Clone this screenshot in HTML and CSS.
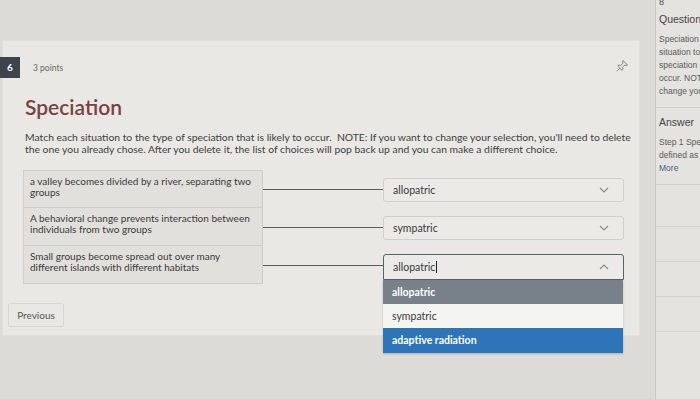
FILE: index.html
```html
<!DOCTYPE html>
<html lang="en">
<head>
    <meta charset="UTF-8">
    <meta name="viewport" content="width=device-width, initial-scale=1.0">
    <title>Speciation</title>
    <link rel="stylesheet" href="styles.css">
</head>
<body>
    <div class="page">
        <div class="main">
            <div class="card">
                <div class="question-header">
                    <div class="badge">6</div>
                    <div class="points">3 points</div>
                    <svg class="pin" width="14" height="14" viewBox="0 0 14 14">
                        <path d="M8 1.5 L12.5 6 L11.3 6.6 L9.6 6.2 L7.6 8.2 L7.9 10.4 L7 11.3 L2.7 7 L3.6 6.1 L5.8 6.4 L7.8 4.4 L7.4 2.7 Z" fill="none" stroke="#777" stroke-width="0.9" stroke-linejoin="round"/>
                        <path d="M4.8 9.2 L1.8 12.2" stroke="#777" stroke-width="0.9"/>
                    </svg>
                </div>

                <h1 class="title">Speciation</h1>

                <p class="prompt">Match each situation to the type of speciation that is likely to occur.&nbsp; NOTE: If you want to change your selection, you'll need to delete the one you already chose. After you delete it, the list of choices will pop back up and you can make a different choice.</p>

                <div class="match-list">
                    <div class="match-row">
                        <div class="situation first">a valley becomes divided by a river, separating two groups</div>
                        <div class="connector"></div>
                        <div class="select">
                            <span>allopatric</span>
                            <svg class="chevron" width="10" height="6" viewBox="0 0 10 6"><path d="M1 1 L5 5 L9 1" fill="none" stroke="#8a8a8a" stroke-width="1.1"/></svg>
                        </div>
                    </div>
                    <div class="match-row">
                        <div class="situation">A behavioral change prevents interaction between individuals from two groups</div>
                        <div class="connector"></div>
                        <div class="select">
                            <span>sympatric</span>
                            <svg class="chevron" width="10" height="6" viewBox="0 0 10 6"><path d="M1 1 L5 5 L9 1" fill="none" stroke="#8a8a8a" stroke-width="1.1"/></svg>
                        </div>
                    </div>
                    <div class="match-row">
                        <div class="situation">Small groups become spread out over many different islands with different habitats</div>
                        <div class="connector"></div>
                        <div class="select open">
                            <span>allopatric<span class="caret"></span></span>
                            <svg class="chevron" width="10" height="6" viewBox="0 0 10 6"><path d="M1 5 L5 1 L9 5" fill="none" stroke="#8a8a8a" stroke-width="1.1"/></svg>
                            <div class="options">
                                <div class="option hover">allopatric</div>
                                <div class="option">sympatric</div>
                                <div class="option active">adaptive radiation</div>
                            </div>
                        </div>
                    </div>
                </div>

                <button class="prev-button">Previous</button>
            </div>
        </div>

        <div class="side">
            <div class="side-top">8</div>
            <div class="side-title">Question</div>
            <div class="side-text">Speciation<br>situation to<br>speciation<br>occur. NOTE<br>change your</div>
            <div class="side-sep"></div>
            <div class="side-title">Answer</div>
            <div class="side-text">Step 1 Spe<br>defined as<br><span class="more">More</span></div>
            <div class="side-sep"></div>
            <div class="side-block"></div>
            <div class="side-block"></div>
            <div class="side-block"></div>
            <div class="side-block"></div>
        </div>
    </div>
</body>
</html>
```

FILE: styles.css
```css
body {
    margin: 0;
    background: #dcdbd7;
    font-family: Lato, "Open Sans", sans-serif;
    color: #3b3b3b;
}
.page {
    display: flex;
    width: 700px;
    height: 399px;
    overflow: hidden;
}
.main {
    width: 655px;
    flex-shrink: 0;
    padding-top: 41px;
}
.card {
    position: relative;
    margin-left: 3px;
    width: 636px;
    height: 294px;
    background: #e9e8e4;
    box-shadow: 0 0 0 1px #e1e0dc;
}
.question-header {
    display: flex;
    align-items: center;
    height: 21px;
    padding-top: 16px;
}
.badge {
    width: 20px;
    height: 21px;
    margin-left: -3px;
    background: #3d444b;
    color: #fff;
    font-size: 10px;
    font-weight: bold;
    line-height: 21px;
    text-align: center;
}
.points {
    margin-left: 13px;
    font-size: 8.5px;
    color: #666;
}
.pin {
    margin-left: auto;
    margin-right: 10px;
    margin-top: -4px;
}
.title {
    margin: 16px 0 0 22px;
    font-size: 21px;
    font-weight: 600;
    color: #7c4043;
    line-height: 26px;
}
.prompt {
    margin: 11px 0 0 22px;
    width: 612px;
    font-size: 10.35px;
    line-height: 12px;
    color: #3e3e3e;
}
.match-list {
    margin: 15px 0 0 20px;
}
.match-row {
    display: flex;
    align-items: center;
}
.situation {
    box-sizing: border-box;
    width: 240px;
    height: 38px;
    padding: 5px 6px;
    background: #e1e0dc;
    border: 1px solid #cfceca;
    border-top: none;
    font-size: 10px;
    line-height: 11px;
    color: #3a3a3a;
}
.situation.first {
    border-top: 1px solid #cfceca;
    height: 38px;
}
.connector {
    width: 120px;
    height: 1px;
    background: #5c5c5c;
}
.select {
    position: relative;
    box-sizing: border-box;
    display: flex;
    align-items: center;
    width: 241px;
    height: 24px;
    margin-top: 2px;
    padding: 0 14px 0 9px;
    background: #ebeae6;
    border: 1px solid #d0cfcb;
    border-radius: 3px;
    font-size: 10.5px;
    color: #3a3a3a;
}
.select span {
    flex: 1;
}
.select.open {
    height: 26px;
    margin-top: 4px;
    border: 1px solid #56627a;
    border-radius: 3px 3px 0 0;
}
.caret {
    display: inline-block;
    width: 1px;
    height: 12px;
    margin-left: 1px;
    vertical-align: -2px;
    background: #222;
}
.options {
    position: absolute;
    top: 25px;
    left: -1px;
    width: 240px;
    box-shadow: 0 1px 2px rgba(0, 0, 0, 0.2);
}
.option {
    height: 24px;
    padding-left: 9px;
    line-height: 24px;
    font-size: 10.5px;
    background: #f4f4f1;
    color: #3a3a3a;
}
.option.hover {
    background: #78808a;
    color: #fff;
    font-weight: bold;
}
.option.active {
    height: 25px;
    background: #2e74b9;
    color: #fff;
    font-weight: bold;
}
.prev-button {
    position: absolute;
    left: 5px;
    top: 262px;
    width: 56px;
    height: 24px;
    padding: 0;
    background: #e9e8e4;
    border: 1px solid #d6d5d1;
    border-radius: 2px;
    font-family: Lato, sans-serif;
    font-size: 10px;
    color: #555;
}
.side {
    flex: 1;
    background: #e4e3df;
    border-left: 1px solid #cac9c5;
    padding-left: 3px;
    font-family: "Liberation Sans", Arial, sans-serif;
    white-space: nowrap;
    overflow: hidden;
}
.side-top {
    height: 8px;
    font-size: 9px;
    line-height: 4px;
    color: #444;
    overflow: hidden;
}
.side-title {
    margin-top: 4px;
    font-size: 10.5px;
    line-height: 14px;
    color: #444;
}
.side-text {
    margin-top: 7px;
    font-size: 8.5px;
    line-height: 13px;
    color: #5a5a5a;
}
.more {
    color: #4a5a8e;
}
.side-sep {
    height: 1px;
    margin: 9px 0 7px -3px;
    background: #d0cfcb;
}
.side-block {
    height: 34px;
    margin-left: -3px;
    border-bottom: 1px solid #d4d3cf;
}
```
